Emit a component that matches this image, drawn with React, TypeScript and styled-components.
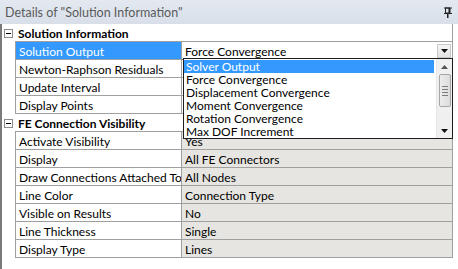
import styled, { createGlobalStyle } from 'styled-components';

const GlobalStyle = createGlobalStyle`
  html, body {
    margin: 0;
    padding: 0;
    background: #ffffff;
  }
  body {
    font-family: Lato, "Noto Sans", sans-serif;
    font-size: 12px;
    color: #000;
  }
`;

type Row =
  | { kind: 'header'; label: string }
  | { kind: 'prop'; label: string; value?: string; readonly?: boolean; selected?: boolean };

// values under the open list are covered in the picture, so they stay empty
const rows: Row[] = [
  { kind: 'header', label: 'Solution Information' },
  { kind: 'prop', label: 'Solution Output', value: 'Force Convergence', selected: true },
  { kind: 'prop', label: 'Newton-Raphson Residuals' },
  { kind: 'prop', label: 'Update Interval' },
  { kind: 'prop', label: 'Display Points' },
  { kind: 'header', label: 'FE Connection Visibility' },
  { kind: 'prop', label: 'Activate Visibility', value: 'Yes', readonly: true },
  { kind: 'prop', label: 'Display', value: 'All FE Connectors', readonly: true },
  { kind: 'prop', label: 'Draw Connections Attached To', value: 'All Nodes', readonly: true },
  { kind: 'prop', label: 'Line Color', value: 'Connection Type', readonly: true },
  { kind: 'prop', label: 'Visible on Results', value: 'No', readonly: true },
  { kind: 'prop', label: 'Line Thickness', value: 'Single', readonly: true },
  { kind: 'prop', label: 'Display Type', value: 'Lines', readonly: true },
];

const options = [
  'Solver Output',
  'Force Convergence',
  'Displacement Convergence',
  'Moment Convergence',
  'Rotation Convergence',
  'Max DOF Increment',
];

const Panel = styled.div`
  position: relative;
  width: 458px;
  height: 269px;
  overflow: hidden;
  background: #fff;
`;

const TitleBar = styled.div`
  height: 24px;
  display: flex;
  align-items: center;
  justify-content: space-between;
  padding: 0 6px 0 5px;
  background: linear-gradient(#e4e9f0, #d8dfe9);
  color: #5b5b5b;
  font-size: 12.5px;
`;

const Body = styled.div`
  display: flex;
  height: 245px;
  border-left: 2px solid #7a7a7a;
`;

const Grid = styled.div`
  width: 451px;
  display: flex;
  flex-direction: column;
`;

const GridRow = styled.div`
  display: grid;
  grid-template-columns: 13px 167px 1fr;
  height: 18px;
`;

const Gutter = styled.div`
  display: flex;
  align-items: center;
  justify-content: center;
`;

const Expander = styled.span`
  width: 7px;
  height: 7px;
  border: 1px solid #8c8c8c;
  background: #fff;
  position: relative;
  &::after {
    content: '';
    position: absolute;
    left: 1px;
    top: 3px;
    width: 5px;
    height: 1px;
    background: #000;
  }
`;

const HeaderCell = styled.div`
  grid-column: 2 / 4;
  display: flex;
  align-items: center;
  padding: 1px 0 0 3px;
  font-weight: bold;
  border-bottom: 1px solid #a0a0a0;
  border-right: 1px solid #a0a0a0;
`;

const LabelCell = styled.div<{ $selected?: boolean }>`
  display: flex;
  align-items: center;
  padding: 1px 0 0 3px;
  white-space: nowrap;
  overflow: hidden;
  border-left: 1px solid #a0a0a0;
  border-bottom: 1px solid #a0a0a0;
  border-right: 1px solid #a0a0a0;
  background: ${(p) => (p.$selected ? '#3399ff' : '#fff')};
  color: ${(p) => (p.$selected ? '#fff' : '#000')};
`;

const ValueCell = styled.div<{ $readonly?: boolean }>`
  display: flex;
  align-items: center;
  padding: 1px 0 0 3px;
  white-space: nowrap;
  overflow: hidden;
  border-bottom: 1px solid #a0a0a0;
  border-right: 1px solid #a0a0a0;
  background: ${(p) => (p.$readonly ? '#e6e5e1' : '#fff')};
`;

const Combo = styled.div`
  display: flex;
  align-items: center;
  justify-content: space-between;
  padding: 1px 0 0 3px;
  border-bottom: 1px solid #6e6e6e;
  border-right: 1px solid #a0a0a0;
  background: #fff;
`;

const DropButton = styled.span`
  width: 14px;
  height: 14px;
  margin-right: 1px;
  display: flex;
  align-items: center;
  justify-content: center;
  background: linear-gradient(#f6f6f6, #e2e2e2);
  border: 1px solid #c9c9c9;
  box-sizing: border-box;
`;

const List = styled.div`
  position: absolute;
  left: 183px;
  top: 58px;
  width: 270px;
  height: 81px;
  box-sizing: border-box;
  border: 1px solid #1e1e1e;
  background: #fff;
  display: flex;
`;

const Items = styled.div`
  flex: 1;
  padding-top: 1px;
`;

const Item = styled.div<{ $active?: boolean }>`
  height: 13px;
  line-height: 13px;
  padding-left: 2px;
  margin-right: 2px;
  background: ${(p) => (p.$active ? '#3399ff' : 'transparent')};
  color: ${(p) => (p.$active ? '#fff' : '#000')};
  white-space: nowrap;
`;

const ScrollBar = styled.div`
  width: 15px;
  background: #f0f0f0;
  border-left: 1px solid #e6e6e6;
  display: flex;
  flex-direction: column;
  align-items: center;
`;

const ScrollArrow = styled.div`
  height: 15px;
  width: 15px;
  display: flex;
  align-items: center;
  justify-content: center;
`;

const Thumb = styled.div`
  width: 12px;
  height: 33px;
  border: 1px solid #a6a6a6;
  border-radius: 2px;
  box-sizing: border-box;
  background: linear-gradient(90deg, #ececec, #dcdcdc);
  display: flex;
  flex-direction: column;
  align-items: center;
  justify-content: center;
  gap: 2px;
`;

const Grip = styled.span`
  width: 6px;
  height: 1px;
  background: #7c7c7c;
`;

const Spacer = styled.div`
  flex: 1;
`;

const Pin = () => (
  <svg width="8" height="11" viewBox="0 0 8 11">
    <rect x="0" y="0.5" width="8" height="1" fill="#222" />
    <rect x="1.5" y="1" width="4" height="5" fill="none" stroke="#222" strokeWidth="1" />
    <rect x="4.5" y="1" width="2" height="5" fill="#222" />
    <rect x="0" y="6" width="8" height="1" fill="#222" />
    <rect x="3" y="7" width="1.5" height="4" fill="#222" />
  </svg>
);

const Triangle = ({ up }: { up?: boolean }) => (
  <svg width="7" height="4" viewBox="0 0 7 4">
    <path d={up ? 'M0 4 L3.5 0 L7 4 Z' : 'M0 0 L7 0 L3.5 4 Z'} fill={up ? '#555' : '#111'} />
  </svg>
);

const App = () => {
  return (
    <Panel>
      <GlobalStyle />
      <TitleBar>
        <span>Details of "Solution Information"</span>
        <Pin />
      </TitleBar>
      <Body>
        <Grid>
          {rows.map((row) =>
            row.kind === 'header' ? (
              <GridRow key={row.label}>
                <Gutter>
                  <Expander />
                </Gutter>
                <HeaderCell>{row.label}</HeaderCell>
              </GridRow>
            ) : (
              <GridRow key={row.label}>
                <Gutter />
                <LabelCell $selected={row.selected}>{row.label}</LabelCell>
                {row.selected ? (
                  <Combo>
                    {row.value}
                    <DropButton>
                      <Triangle />
                    </DropButton>
                  </Combo>
                ) : (
                  <ValueCell $readonly={row.readonly}>{row.value}</ValueCell>
                )}
              </GridRow>
            )
          )}
        </Grid>
      </Body>
      <List>
        <Items>
          {options.map((o, i) => (
            <Item key={o} $active={i === 0}>
              {o}
            </Item>
          ))}
        </Items>
        <ScrollBar>
          <ScrollArrow>
            <Triangle up />
          </ScrollArrow>
          <Thumb>
            <Grip />
            <Grip />
            <Grip />
            <Grip />
          </Thumb>
          <Spacer />
          <ScrollArrow>
            <Triangle up={false} />
          </ScrollArrow>
        </ScrollBar>
      </List>
    </Panel>
  );
};

export default App;
